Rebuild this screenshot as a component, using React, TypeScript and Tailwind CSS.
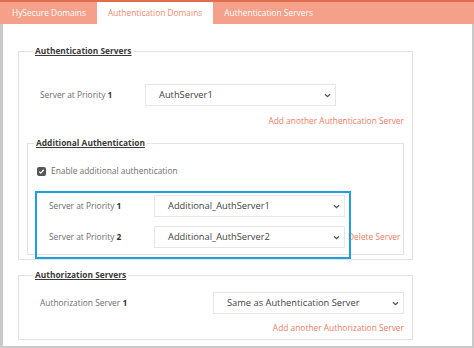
import React from "react";

const Chevron = () => (
  <svg width="7" height="5" viewBox="0 0 7 5" className="shrink-0">
    <path d="M1 1.2 L3.5 3.6 L6 1.2" fill="none" stroke="#555" strokeWidth="1.3" />
  </svg>
);

const Select = ({ value, w }: { value: string; w: string }) => (
  <div className={`${w} h-[22px] border border-[#e6e6e6] bg-white flex items-center justify-between pl-[13px] pr-[4px] text-[9.3px] text-[#3f3f3f]`}>
    <span>{value}</span>
    <Chevron />
  </div>
);

const Label = ({ text, n, w }: { text: string; n: string; w: string }) => (
  <div className={`${w} shrink-0 text-[8.4px] text-[#6e6e6e]`}>
    {text} <b className="text-[#333] font-bold">{n}</b>
  </div>
);

const Legend = ({ children }: { children: React.ReactNode }) => (
  <legend className="ml-[6px] px-[2px] text-[8.4px] leading-[12px] font-bold text-[#3a3a3a] underline underline-offset-[1px]">
    {children}
  </legend>
);

export default function App() {
  return (
    <div
      className="relative w-[474px] h-[348px] bg-white overflow-hidden"
      style={{ fontFamily: '"Open Sans", "Liberation Sans", sans-serif' }}
    >
      <div className="h-[24px] border-t-2 border-[#e06d4d] bg-[#f5a088] flex items-stretch text-[8.4px] text-white">
        <div className="pl-[12px] pr-[11px] flex items-center">HySecure Domains</div>
        <div className="px-[11px] flex items-center bg-white text-[#f08a6e]">Authentication Domains</div>
        <div className="px-[11px] flex items-center">Authentication Servers</div>
      </div>
      <div className="h-[324px] border-l-[3px] border-r-2 border-b-2 border-[#c9c9c9] pt-[21px]">
        <fieldset className="ml-[15px] w-[395px] border border-[#e2e2e2] px-[8px] pb-[4px]">
          <Legend>Authentication Servers</Legend>
          <div className="mt-[27px] pl-[13px] flex items-center">
            <Label text="Server at Priority" n="1" w="w-[105px]" />
            <Select value="AuthServer1" w="w-[191px]" />
          </div>
          <div className="mt-[9px] h-[12px] flex items-center justify-end text-[8.4px] text-[#ec7e66]">
            Add another Authentication Server
          </div>
          <fieldset className="mt-[10px] border border-[#e2e2e2] pb-[6px]">
            <Legend>Additional Authentication</Legend>
            <div className="mt-[16px] pl-[9px] h-[12px] flex items-center gap-[5px]">
              <div className="w-[9px] h-[9px] rounded-[2px] bg-[#555] flex items-center justify-center">
                <svg width="7" height="7" viewBox="0 0 7 7">
                  <path d="M1.2 3.6 L2.8 5.1 L5.8 1.8" fill="none" stroke="#fff" strokeWidth="1.3" />
                </svg>
              </div>
              <span className="text-[8.4px] text-[#6e6e6e]">Enable additional authentication</span>
            </div>
            <div className="mt-[18px] pl-[21px] flex items-center">
              <Label text="Server at Priority" n="1" w="w-[105px]" />
              <Select value="Additional_AuthServer1" w="w-[191px]" />
            </div>
            <div className="mt-[9px] pl-[21px] flex items-center">
              <Label text="Server at Priority" n="2" w="w-[105px]" />
              <Select value="Additional_AuthServer2" w="w-[191px]" />
              <span className="ml-[3px] text-[8.4px] text-[#ec7e66]">Delete Server</span>
            </div>
          </fieldset>
        </fieldset>
        <fieldset className="mt-[9px] ml-[15px] w-[395px] border border-[#e2e2e2] px-[8px] pb-[5px]">
          <Legend>Authorization Servers</Legend>
          <div className="mt-[11px] pl-[13px] flex items-center">
            <Label text="Authorization Server" n="1" w="w-[173px]" />
            <Select value="Same as Authentication Server" w="w-[191px]" />
          </div>
          <div className="mt-[8px] h-[12px] flex items-center justify-end text-[8.4px] text-[#ec7e66]">
            Add another Authorization Server
          </div>
        </fieldset>
      </div>
      <div className="absolute left-[35px] top-[191px] w-[316px] h-[68px] border-2 border-[#1c9fe3] pointer-events-none" />
    </div>
  );
}
